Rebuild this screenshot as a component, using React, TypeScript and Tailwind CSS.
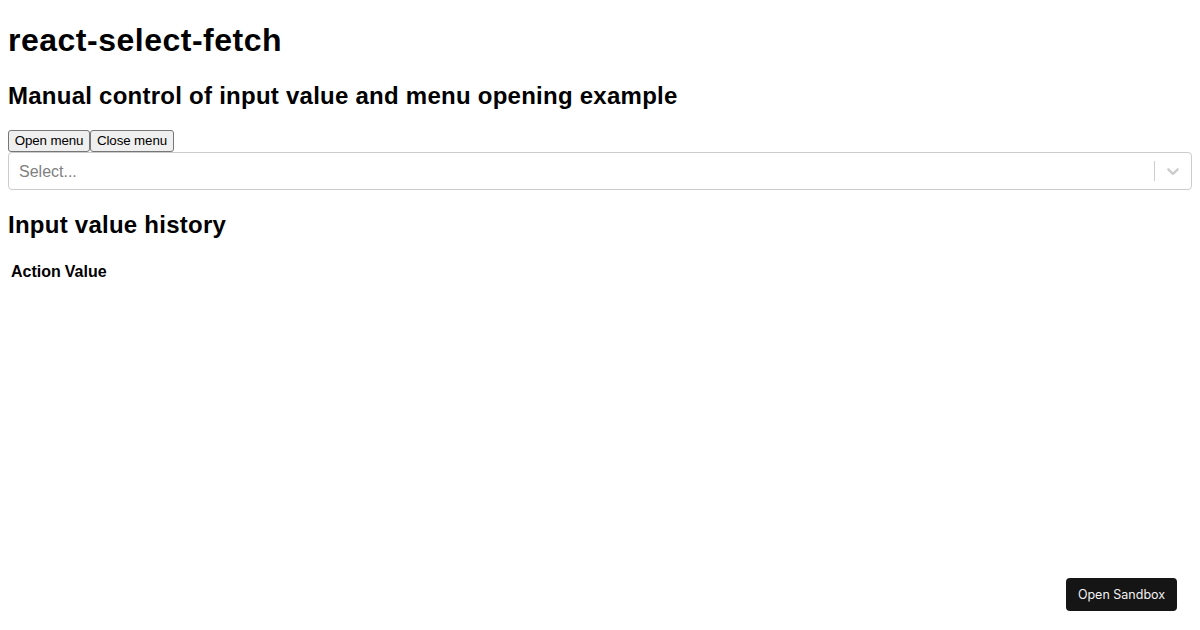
function Chevron() {
  return (
    <svg viewBox="0 0 20 20" width="20" height="20" fill="currentColor" aria-hidden="true">
      <path d="M4.516 7.548c0.436-0.446 1.043-0.481 1.576 0l3.908 3.747 3.908-3.747c0.533-0.481 1.141-0.446 1.574 0 0.436 0.445 0.408 1.197 0 1.615-0.406 0.418-4.695 4.502-4.695 4.502-0.217 0.223-0.502 0.335-0.787 0.335s-0.57-0.112-0.789-0.335c0 0-4.287-4.084-4.695-4.502s-0.436-1.17 0-1.615z" />
    </svg>
  );
}

export default function App() {
  return (
    <div className="min-h-[630px] bg-white px-2 pt-[22px] text-black font-['Liberation_Sans',Arial,sans-serif]">
      <h1 className="text-[32px] font-bold leading-[37px] tracking-[0.5px]">react-select-fetch</h1>
      <h2 className="mt-[23px] text-[24px] font-bold leading-[28px] tracking-[0.25px]">
        Manual control of input value and menu opening example
      </h2>
      <div className="mt-[20px] flex">
        <button className="h-[22px] w-[82px] rounded-[3px] border border-[#767676] bg-[#efefef] text-[13.33px] leading-[20px] tracking-[-0.1px]">
          Open menu
        </button>
        <button className="h-[22px] w-[84px] rounded-[3px] border border-[#767676] bg-[#efefef] text-[13.33px] leading-[20px] tracking-[-0.1px]">
          Close menu
        </button>
      </div>
      <div className="flex h-[38px] items-center rounded-[4px] border border-[#cccccc] bg-white">
        <div className="flex-1 px-[10px] pt-px text-[16px] text-[#808080]">Select...</div>
        <div className="flex h-full items-center">
          <span className="h-[20px] w-px bg-[#cccccc]" />
          <div className="p-2 text-[#cccccc]">
            <Chevron />
          </div>
        </div>
      </div>
      <h2 className="mt-[21px] text-[24px] font-bold leading-[28px] tracking-[0.25px]">Input value history</h2>
      <table className="mt-[21px] border-separate border-spacing-[2px]">
        <thead>
          <tr>
            <th className="p-px text-[16px] font-bold leading-[18px]">Action</th>
            <th className="p-px text-[16px] font-bold leading-[18px]">Value</th>
          </tr>
        </thead>
      </table>
      <button className="fixed bottom-[19px] right-[23px] h-[33px] w-[111px] rounded-[4px] bg-[#151515] pt-px font-['Inter','Liberation_Sans',sans-serif] text-[12.5px] text-[#f2f2f2]">
        Open Sandbox
      </button>
    </div>
  );
}
